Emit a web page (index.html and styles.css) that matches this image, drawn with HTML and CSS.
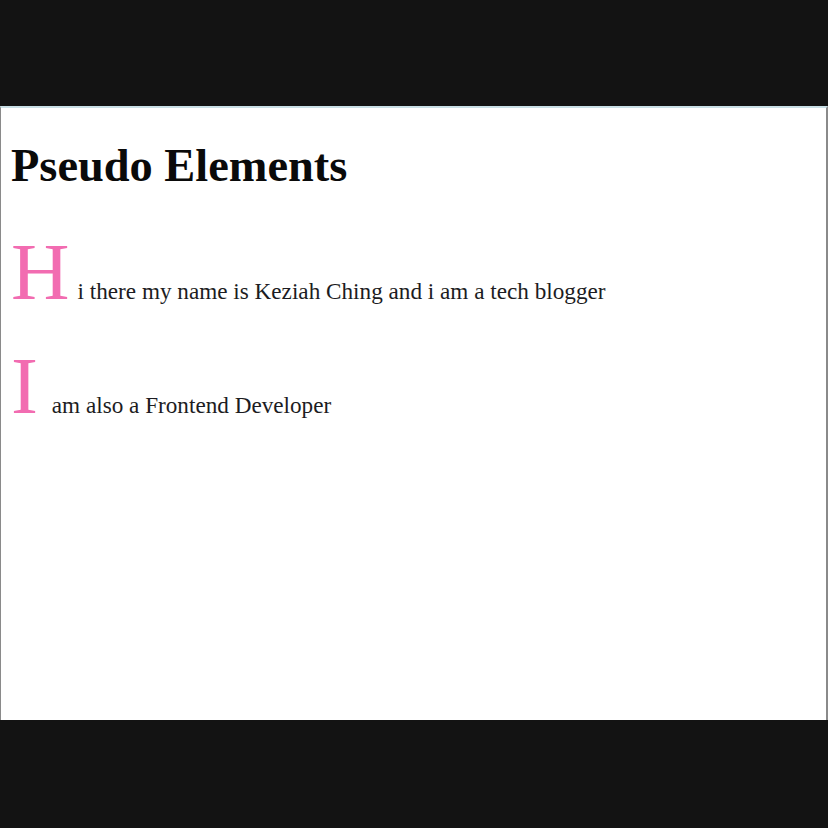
FILE: index.html
```html
<!DOCTYPE html>
<html>
<head>
<meta charset="utf-8">
<link rel="stylesheet" href="styles.css">
</head>
<body>
<div class="band"></div>
<div class="viewport">
  <h1 class="title">Pseudo Elements</h1>
  <p class="drop">Hi there my name is Keziah Ching and i am a tech blogger</p>
  <p class="drop">I am also a Frontend Developer</p>
</div>
<div class="band band-bottom"></div>
</body>
</html>
```
FILE: styles.css
```css
html, body {
  margin: 0;
  padding: 0;
  background: #131313;
}
body {
  width: 828px;
  height: 828px;
  overflow: hidden;
  font-family: "Liberation Serif", "Times New Roman", serif;
}
.band {
  height: 106px;
  background: #131313;
}
.band-bottom {
  height: 108px;
}
.viewport {
  box-sizing: border-box;
  height: 614px;
  background: #ffffff;
  border-top: 2px solid #c9dfe6;
  border-left: 1px solid #8a8a8a;
  border-right: 2px solid #8a8a8a;
  padding: 30px 10px 0 10px;
  color: #1c1c22;
}
.title {
  margin: 0;
  font-size: 46.4px;
  line-height: 56px;
  font-weight: bold;
  color: #0a0a0a;
}
.drop {
  margin: 38px 0 0 0;
  font-size: 23.2px;
  line-height: 27px;
}
.drop + .drop {
  margin-top: 33px;
}
.drop::first-letter {
  font-size: 81px;
  line-height: 81px;
  color: #f26cb1;
  margin-right: 8px;
}
```
